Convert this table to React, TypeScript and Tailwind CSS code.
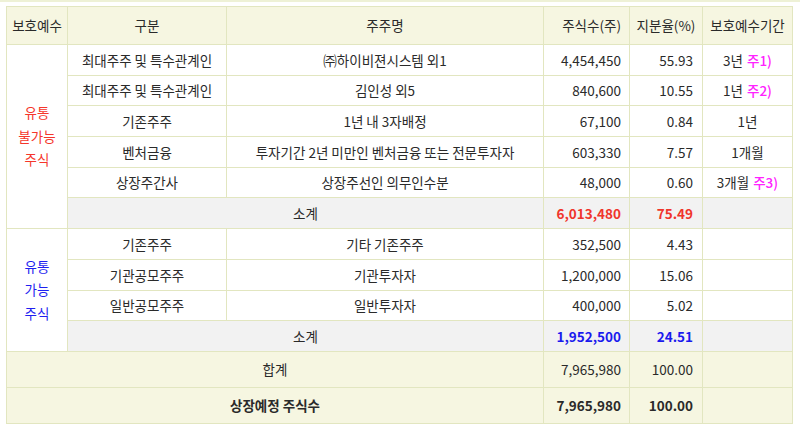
import React from "react";

const B = "border border-[#e2e6c0]";
const F = { fontFamily: '"Noto Sans CJK KR", "Noto Sans", sans-serif' };

type Row = { g: string; n: string; s: string; p: string; t?: string; note?: string };

const rows1: Row[] = [
  { g: "최대주주 및 특수관계인", n: "㈜하이비젼시스템 외1", s: "4,454,450", p: "55.93", t: "3년", note: "주1)" },
  { g: "최대주주 및 특수관계인", n: "김인성 외5", s: "840,600", p: "10.55", t: "1년", note: "주2)" },
  { g: "기존주주", n: "1년 내 3자배정", s: "67,100", p: "0.84", t: "1년" },
  { g: "벤처금융", n: "투자기간 2년 미만인 벤처금융 또는 전문투자자", s: "603,330", p: "7.57", t: "1개월" },
  { g: "상장주간사", n: "상장주선인 의무인수분", s: "48,000", p: "0.60", t: "3개월", note: "주3)" },
];
const rows2: Row[] = [
  { g: "기존주주", n: "기타 기존주주", s: "352,500", p: "4.43" },
  { g: "기관공모주주", n: "기관투자자", s: "1,200,000", p: "15.06" },
  { g: "일반공모주주", n: "일반투자자", s: "400,000", p: "5.02" },
];

function Label({ lines }: { lines: string[] }) {
  return (
    <div className="flex flex-col items-center">
      {lines.map((l) => (
        <div key={l} className="h-[23.5px] leading-[23.5px]">
          {l}
        </div>
      ))}
    </div>
  );
}

function DataRow({ r, first, label, rs, color }: { r: Row; first: boolean; label?: React.ReactNode; rs?: number; color?: string }) {
  return (
    <tr className="h-[30.7px]">
      {first && (
        <td rowSpan={rs} className={`${B} bg-white text-center align-middle ${color}`}>
          {label}
        </td>
      )}
      <td className={`${B} text-center`}>{r.g}</td>
      <td className={`${B} text-center`}>{r.n}</td>
      <td className={`${B} text-right pr-[8px]`}>{r.s}</td>
      <td className={`${B} text-right pr-[9px]`}>{r.p}</td>
      <td className={`${B} text-center`}>
        {r.t}
        {r.note && <span className="text-[#ff22ff] ml-[4px] font-medium">{r.note}</span>}
      </td>
    </tr>
  );
}

export default function App() {
  return (
    <div className="w-[800px] h-[429px] bg-white overflow-hidden" style={F}>
      <div className="h-[2px] bg-[#eef1d6]" />
      <div className="pt-[4px] pl-[6px]">
        <table className="border-collapse table-fixed w-[786px] text-[13.5px] text-[#2a2a2a]">
          <colgroup>
            <col className="w-[61px]" />
            <col className="w-[159px]" />
            <col className="w-[317px]" />
            <col className="w-[86px]" />
            <col className="w-[73px]" />
            <col className="w-[90px]" />
          </colgroup>
          <tbody>
            <tr className="h-[38px] bg-[#f6f6e1]">
              <td className={`${B} text-center`}>보호예수</td>
              <td className={`${B} text-center`}>구분</td>
              <td className={`${B} text-center`}>주주명</td>
              <td className={`${B} text-right pr-[8px]`}>주식수(주)</td>
              <td className={`${B} text-center`}>지분율(%)</td>
              <td className={`${B} text-center`}>보호예수기간</td>
            </tr>
            {rows1.map((r, i) => (
              <DataRow
                key={"a" + i}
                r={r}
                first={i === 0}
                rs={6}
                color="text-[#f5362b]"
                label={<Label lines={["유통", "불가능", "주식"]} />}
              />
            ))}
            <tr className="h-[30.7px] bg-[#f2f2f2]">
              <td colSpan={2} className={`${B} text-center`}>소계</td>
              <td className={`${B} text-right pr-[8px] font-bold text-[#f0352b]`}>6,013,480</td>
              <td className={`${B} text-right pr-[9px] font-bold text-[#f0352b]`}>75.49</td>
              <td className={`${B}`}></td>
            </tr>
            {rows2.map((r, i) => (
              <DataRow
                key={"b" + i}
                r={r}
                first={i === 0}
                rs={4}
                color="text-[#1f1ff0]"
                label={<Label lines={["유통", "가능", "주식"]} />}
              />
            ))}
            <tr className="h-[30.7px] bg-[#f2f2f2]">
              <td colSpan={2} className={`${B} text-center`}>소계</td>
              <td className={`${B} text-right pr-[8px] font-bold text-[#1a1aee]`}>1,952,500</td>
              <td className={`${B} text-right pr-[9px] font-bold text-[#1a1aee]`}>24.51</td>
              <td className={`${B}`}></td>
            </tr>
            <tr className="h-[36px] bg-[#f6f6e1]">
              <td colSpan={3} className={`${B} text-center`}>합계</td>
              <td className={`${B} text-right pr-[8px]`}>7,965,980</td>
              <td className={`${B} text-right pr-[9px]`}>100.00</td>
              <td className={`${B}`}></td>
            </tr>
            <tr className="h-[36px] bg-[#f6f6e1] font-bold">
              <td colSpan={3} className={`${B} text-center`}>상장예정 주식수</td>
              <td className={`${B} text-right pr-[8px]`}>7,965,980</td>
              <td className={`${B} text-right pr-[9px]`}>100.00</td>
              <td className={`${B}`}></td>
            </tr>
          </tbody>
        </table>
      </div>
    </div>
  );
}
